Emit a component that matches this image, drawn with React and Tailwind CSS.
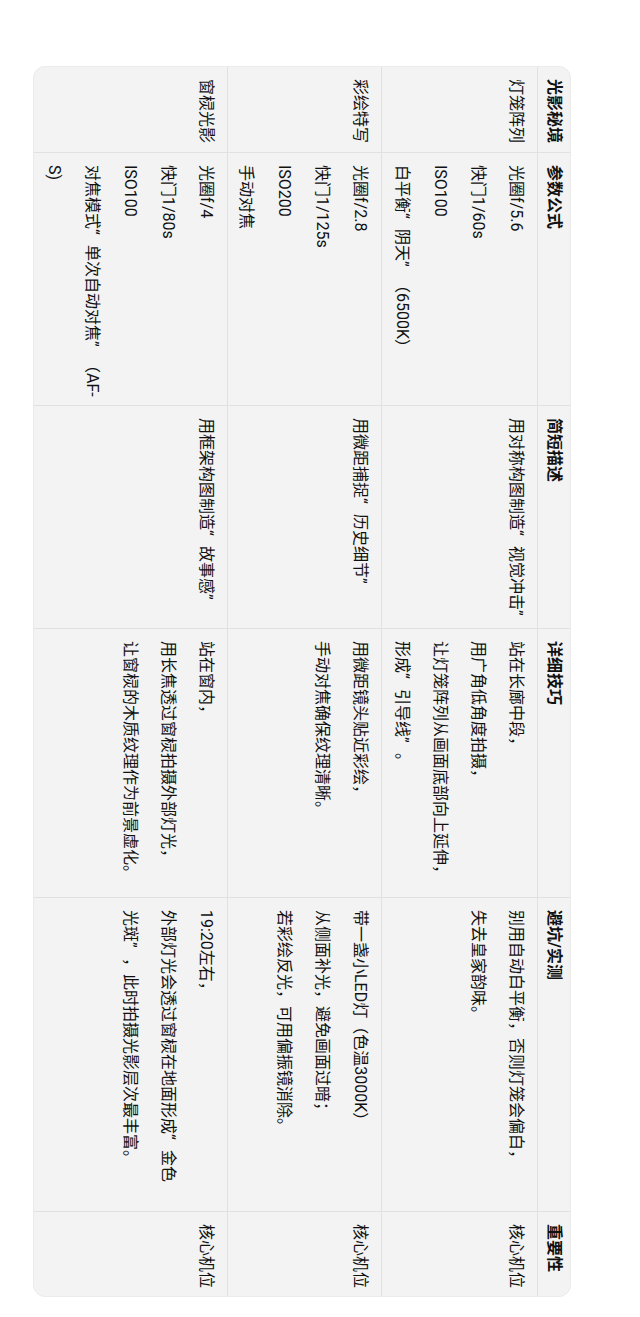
import React from "react";

const rows = [
  {
    name: "灯笼阵列",
    params: ["光圈f/5.6", "快门1/60s", "ISO100", "白平衡“阴天”（6500K）"],
    desc: ["用对称构图制造“视觉冲击”"],
    detail: ["站在长廊中段，", "用广角低角度拍摄，", "让灯笼阵列从画面底部向上延伸，", "形成“引导线”。"],
    tips: ["别用自动白平衡，否则灯笼会偏白，", "失去皇家韵味。"],
    level: "核心机位",
    h: "h-[156px]",
  },
  {
    name: "彩绘特写",
    params: ["光圈f/2.8", "快门1/125s", "ISO200", "手动对焦"],
    desc: ["用微距捕捉“历史细节”"],
    detail: ["用微距镜头贴近彩绘，", "手动对焦确保纹理清晰。"],
    tips: ["带一盏小LED灯（色温3000K）", "从侧面补光，避免画面过暗；", "若彩绘反光，可用偏振镜消除。"],
    level: "核心机位",
    h: "h-[154px]",
  },
  {
    name: "窗棂光影",
    params: ["光圈f/4", "快门1/80s", "ISO100", "对焦模式“单次自动对焦”（AF-", "S)"],
    desc: ["用框架构图制造“故事感”"],
    detail: ["站在窗内，", "用长焦透过窗棂拍摄外部灯光，", "让窗棂的木质纹理作为前景虚化。"],
    tips: ["19:20左右，", "外部灯光会透过窗棂在地面形成“金色", "光斑”，此时拍摄光影层次最丰富。"],
    level: "核心机位",
    h: "h-[195px]",
  },
];

const headers = ["光影秘境", "参数公式", "简短描述", "详细技巧", "避坑/实测", "重要性"];
const widths = ["w-[86px]", "w-[253px]", "w-[223px]", "w-[269px]", "w-[314px]", "w-[86px]"];

// quotes sit at the left of a full-width box, like in the screenshot
function Txt({ t }) {
  return t.split(/([“”])/).map((s, i) =>
    s === "“" || s === "”" ? (
      <span key={i} className="inline-block w-[1em] text-left">{s}</span>
    ) : (
      <React.Fragment key={i}>{s}</React.Fragment>
    )
  );
}

function Cell({ lines, i, last }) {
  return (
    <div
      className={`${widths[i]} shrink-0 px-3 pt-[2px] ${i < 5 ? "border-r border-[#e1e1e1]" : ""} ${last ? "" : "border-b border-[#e1e1e1]"}`}
    >
      {lines.map((l, k) => (
        <div key={k} className="whitespace-nowrap leading-[38px]">
          <Txt t={l} />
        </div>
      ))}
    </div>
  );
}

export default function App() {
  return (
    <div className="w-[640px] h-[1317px] bg-white pt-[66px] pl-[33px] font-['Roboto','Noto_Sans_CJK_SC',sans-serif] text-[16px] text-[#111111]">
      <div className="w-[538px] h-[1231px]">
        <div className="w-[1231px] h-[538px] origin-top-left rotate-90 translate-x-[538px] bg-[#f3f3f3] rounded-xl border border-[#ebebeb] overflow-hidden flex flex-col">
          {/* header */}
          <div className="flex h-[33px] shrink-0">
            {headers.map((h, i) => (
              <div
                key={h}
                className={`${widths[i]} shrink-0 px-3 flex items-center whitespace-nowrap font-bold border-b border-[#e1e1e1] ${i < 5 ? "border-r" : ""}`}
              >
                <Txt t={h} />
              </div>
            ))}
          </div>

          {rows.map((r, ri) => {
            const last = ri === rows.length - 1;
            return (
              <div key={r.name} className={`flex ${r.h} shrink-0`}>
                <Cell lines={[r.name]} i={0} last={last} />
                <Cell lines={r.params} i={1} last={last} />
                <Cell lines={r.desc} i={2} last={last} />
                <Cell lines={r.detail} i={3} last={last} />
                <Cell lines={r.tips} i={4} last={last} />
                <Cell lines={[r.level]} i={5} last={last} />
              </div>
            );
          })}
        </div>
      </div>
    </div>
  );
}
